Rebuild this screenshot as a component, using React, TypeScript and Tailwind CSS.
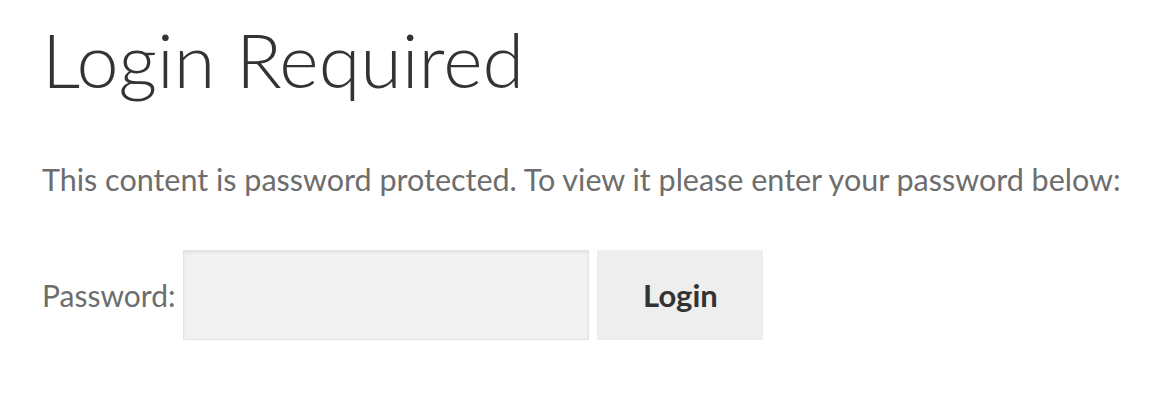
export default function App() {
  return (
    <div className="min-h-screen bg-white px-[42px] pt-[9px] font-['Lato','Liberation_Sans',sans-serif]">
      <h1 className="text-[75.5px] font-light leading-[100px] text-[#333333]">Login Required</h1>
      <p className="mt-[50px] whitespace-nowrap text-[30.5px] leading-[40px] text-[#6d6d6d]">
        This content is password protected. To view it please enter your password below:
      </p>
      <form className="mt-[51px] flex items-center" onSubmit={e => e.preventDefault()}>
        <label htmlFor="pw" className="text-[30px] text-[#6d6d6d]">Password:</label>
        <input
          id="pw"
          type="password"
          className="ml-[8px] h-[90px] w-[406px] border border-[#e3e3e3] bg-[#f2f2f2] shadow-[inset_0_2px_3px_rgba(0,0,0,0.06)] outline-none"
        />
        <button type="submit" className="ml-[8px] h-[90px] w-[166px] bg-[#eeeeee] text-[31px] font-bold text-[#333333]">
          Login
        </button>
      </form>
    </div>
  );
}
